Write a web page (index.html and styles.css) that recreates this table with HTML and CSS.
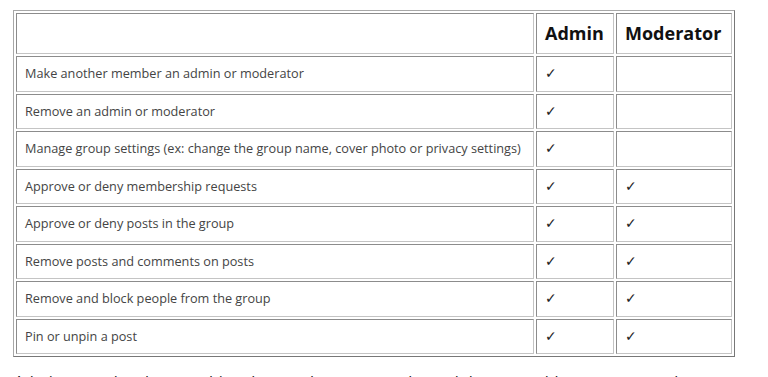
FILE: index.html
```html
<!DOCTYPE html>
<html lang="en">
<head>
    <meta charset="UTF-8">
    <meta name="viewport" content="width=device-width, initial-scale=1.0">
    <title>Group roles</title>
    <link rel="stylesheet" href="styles.css">
</head>
<body>
    <div class="content">
        <table class="roles">
            <thead>
                <tr>
                    <th class="task"></th>
                    <th class="admin">Admin</th>
                    <th class="moderator">Moderator</th>
                </tr>
            </thead>
            <tbody>
                <tr>
                    <td>Make another member an admin or moderator</td>
                    <td class="check">&#10003;</td>
                    <td></td>
                </tr>
                <tr>
                    <td>Remove an admin or moderator</td>
                    <td class="check">&#10003;</td>
                    <td></td>
                </tr>
                <tr>
                    <td>Manage group settings (ex: change the group name, cover photo or privacy settings)</td>
                    <td class="check">&#10003;</td>
                    <td></td>
                </tr>
                <tr>
                    <td>Approve or deny membership requests</td>
                    <td class="check">&#10003;</td>
                    <td class="check">&#10003;</td>
                </tr>
                <tr>
                    <td>Approve or deny posts in the group</td>
                    <td class="check">&#10003;</td>
                    <td class="check">&#10003;</td>
                </tr>
                <tr>
                    <td>Remove posts and comments on posts</td>
                    <td class="check">&#10003;</td>
                    <td class="check">&#10003;</td>
                </tr>
                <tr>
                    <td>Remove and block people from the group</td>
                    <td class="check">&#10003;</td>
                    <td class="check">&#10003;</td>
                </tr>
                <tr>
                    <td>Pin or unpin a post</td>
                    <td class="check">&#10003;</td>
                    <td class="check">&#10003;</td>
                </tr>
            </tbody>
        </table>

        <p class="note">Admins can also do everything that moderators can do, and they can add or remove moderators.</p>
    </div>
</body>
</html>
```

FILE: styles.css
```css
body {
    margin: 0;
    background: white;
    font-family: "Open Sans", "Noto Sans", sans-serif;
    color: #333;
}
.content {
    padding: 10px 13px 0 13px;
}
.roles {
    width: 722px;
    border-collapse: separate;
    border-spacing: 2px;
    border: 1px solid;
    border-color: #a8a8a8 #777 #777 #a8a8a8;
}
.roles th,
.roles td {
    border: 1px solid;
    border-color: #8c8c8c #c4c4c4 #c4c4c4 #8c8c8c;
    text-align: left;
    vertical-align: middle;
}
.roles th {
    padding: 8px 8px;
    font-size: 18px;
    line-height: 23px;
    font-weight: bold;
    color: #111;
    white-space: nowrap;
}
.roles th.admin {
    width: 60px;
}
.roles th.moderator {
    width: 98px;
}
.roles td {
    padding: 8px 8px;
    font-size: 12.7px;
    line-height: 17.5px;
    color: #444;
}
.roles td.check {
    font-family: "DejaVu Sans", sans-serif;
    font-size: 14px;
    color: #222;
}
.note {
    margin: 14px 0 0 1px;
    font-size: 16px;
    color: #222;
}
```
